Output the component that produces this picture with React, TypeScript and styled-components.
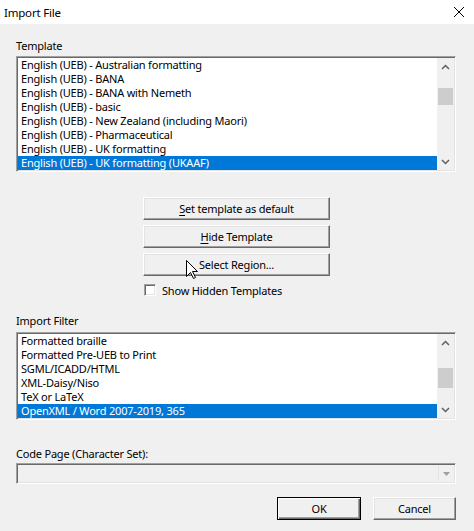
import React from "react";
import styled, { createGlobalStyle } from "styled-components";

const Global = createGlobalStyle`
  html, body { margin: 0; padding: 0; background: #f0f0f0; }
  body {
    font-family: "Noto Sans", "Open Sans", sans-serif;
    font-size: 11px;
    letter-spacing: -0.2px;
    color: #000;
  }
  * { box-sizing: border-box; }
`;

const Window = styled.div`
  position: relative;
  width: 474px;
  height: 531px;
  background: #f0f0f0;
  display: flex;
  flex-direction: column;
  overflow: hidden;
`;

const TitleBar = styled.div`
  height: 24px;
  background: #fff;
  display: flex;
  align-items: center;
  justify-content: space-between;
  padding: 0 10px 0 4px;
  font-size: 11.5px;
`;

const Body = styled.div`
  display: flex;
  flex-direction: column;
  padding: 14px 18px 0 16px;
`;

const Label = styled.div<{ $mt?: number }>`
  line-height: 16px;
  height: 16px;
  margin-top: ${(p) => p.$mt ?? 0}px;
`;

const Sunken = styled.div<{ $h: number; $mt?: number }>`
  height: ${(p) => p.$h}px;
  margin-top: ${(p) => p.$mt ?? 0}px;
  border: 1px solid;
  border-color: #a0a0a0 #ffffff #ffffff #a0a0a0;
  box-shadow: inset 1px 1px #696969, inset -1px -1px #e3e3e3;
  padding: 1px;
  display: flex;
`;

const ListItems = styled.div`
  flex: 1;
  background: #fff;
  display: flex;
  flex-direction: column;
  overflow: hidden;
`;

const Item = styled.div<{ $sel?: boolean }>`
  height: 14px;
  line-height: 14px;
  padding-left: 3px;
  white-space: nowrap;
  background: ${(p) => (p.$sel ? "#0078d7" : "transparent")};
  color: ${(p) => (p.$sel ? "#fff" : "#000")};
`;

const ScrollBar = styled.div`
  width: 17px;
  background: #f0f0f0;
  display: flex;
  flex-direction: column;
`;

const ArrowBtn = styled.div`
  height: 17px;
  display: flex;
  align-items: center;
  justify-content: center;
`;

const Track = styled.div`
  flex: 1;
  display: flex;
  flex-direction: column;
`;

const Thumb = styled.div<{ $top: number; $h: number }>`
  margin-top: ${(p) => p.$top}px;
  height: ${(p) => p.$h}px;
  margin-left: 1px;
  margin-right: 1px;
  background: #cdcdcd;
`;

const ButtonCol = styled.div`
  display: flex;
  flex-direction: column;
  gap: 5px;
  margin-top: 25px;
  padding-left: 127px;
`;

const RaisedButton = styled.div<{ $w: number; $def?: boolean }>`
  width: ${(p) => p.$w}px;
  height: 23px;
  background: #f0f0f0;
  border: 1px solid;
  border-color: ${(p) => (p.$def ? "#000" : "#ffffff #696969 #696969 #ffffff")};
  box-shadow: ${(p) =>
    p.$def
      ? "inset 1px 1px #fff, inset -1px -1px #696969, inset -2px -2px #a0a0a0"
      : "inset -1px -1px #a0a0a0, inset 1px 1px #e3e3e3"};
  display: flex;
  align-items: center;
  justify-content: center;
  line-height: 14px;
  cursor: default;
`;

const U = styled.span`
  text-decoration: underline;
  text-underline-offset: 2px;
`;

const CheckRow = styled.div`
  display: flex;
  align-items: center;
  gap: 6px;
  margin-top: 7px;
  padding-left: 128px;
  height: 14px;
`;

const CheckBox = styled.div`
  width: 12px;
  height: 12px;
  background: #fff;
  border: 1px solid;
  border-color: #a0a0a0 #fff #fff #a0a0a0;
  box-shadow: inset 1px 1px #696969, inset -1px -1px #e3e3e3;
`;

const Combo = styled.div`
  height: 21px;
  margin-top: 1px;
  border: 1px solid;
  border-color: #a0a0a0 #ffffff #ffffff #a0a0a0;
  box-shadow: inset 1px 1px #696969, inset -1px -1px #e3e3e3;
  padding: 2px;
  display: flex;
  justify-content: flex-end;
  background: #f0f0f0;
`;

const ComboBtn = styled.div`
  width: 15px;
  display: flex;
  align-items: center;
  justify-content: center;
  border-left: 1px solid #e3e3e3;
`;

const Footer = styled.div`
  display: flex;
  justify-content: flex-end;
  gap: 12px;
  margin-top: 13px;
`;

const Cursor = styled.svg`
  position: absolute;
  left: 186px;
  top: 260px;
`;

const Up = () => (
  <svg width="9" height="6" viewBox="0 0 9 6">
    <path d="M1 5 L4.5 1.5 L8 5" fill="none" stroke="#606060" strokeWidth="1.5" />
  </svg>
);
const Down = () => (
  <svg width="9" height="6" viewBox="0 0 9 6">
    <path d="M1 1 L4.5 4.5 L8 1" fill="none" stroke="#606060" strokeWidth="1.5" />
  </svg>
);

const templates = [
  "English (UEB) - Australian formatting",
  "English (UEB) - BANA",
  "English (UEB) - BANA with Nemeth",
  "English (UEB) - basic",
  "English (UEB) - New Zealand (including Maori)",
  "English (UEB) - Pharmaceutical",
  "English (UEB) - UK formatting",
  "English (UEB) - UK formatting (UKAAF)",
];

const filters = [
  "Formatted braille",
  "Formatted Pre-UEB to Print",
  "SGML/ICADD/HTML",
  "XML-Daisy/Niso",
  "TeX or LaTeX",
  "OpenXML / Word 2007-2019, 365",
];

function ListBox({
  items,
  selected,
  height,
  mt,
  thumbTop,
  thumbH,
}: {
  items: string[];
  selected: number;
  height: number;
  mt?: number;
  thumbTop: number;
  thumbH: number;
}) {
  return (
    <Sunken $h={height} $mt={mt}>
      <ListItems>
        {items.map((t, i) => (
          <Item key={t} $sel={i === selected}>
            {t}
          </Item>
        ))}
      </ListItems>
      <ScrollBar>
        <ArrowBtn>
          <Up />
        </ArrowBtn>
        <Track>
          <Thumb $top={thumbTop} $h={thumbH} />
        </Track>
        <ArrowBtn>
          <Down />
        </ArrowBtn>
      </ScrollBar>
    </Sunken>
  );
}

export default function App() {
  return (
    <>
      <Global />
      <Window>
        <TitleBar>
          <span>Import File</span>
          <svg width="10" height="10" viewBox="0 0 10 10">
            <path d="M0 0 L10 10 M10 0 L0 10" stroke="#000" strokeWidth="1" />
          </svg>
        </TitleBar>
        <Body>
          <Label>Template</Label>
          <ListBox items={templates} selected={7} height={116} mt={2} thumbTop={13} thumbH={17} />
          <ButtonCol>
            <RaisedButton $w={187}>
              <span>
                <U>S</U>et template as default
              </span>
            </RaisedButton>
            <RaisedButton $w={187}>
              <span>
                <U>H</U>ide Template
              </span>
            </RaisedButton>
            <RaisedButton $w={187}>Select Region...</RaisedButton>
          </ButtonCol>
          <CheckRow>
            <CheckBox />
            <span>Show Hidden Templates</span>
          </CheckRow>
          <Label $mt={16}>Import Filter</Label>
          <ListBox items={filters} selected={5} height={88} mt={3} thumbTop={17} thumbH={20} />
          <Label $mt={26}>Code Page (Character Set):</Label>
          <Combo>
            <ComboBtn>
              <svg width="7" height="4" viewBox="0 0 7 4">
                <path d="M0 0 L7 0 L3.5 4 Z" fill="#a0a0a0" />
              </svg>
            </ComboBtn>
          </Combo>
          <Footer>
            <RaisedButton $w={84} $def>
              OK
            </RaisedButton>
            <RaisedButton $w={83}>Cancel</RaisedButton>
          </Footer>
        </Body>
        <Cursor width="13" height="20" viewBox="0 0 13 20">
          <path
            d="M0.5 0.5 L0.5 16.5 L4.5 12.5 L7.5 18.5 L9.5 17.5 L6.5 11.5 L11.5 11.5 Z"
            fill="#fff"
            stroke="#000"
            strokeWidth="1"
          />
        </Cursor>
      </Window>
    </>
  );
}
